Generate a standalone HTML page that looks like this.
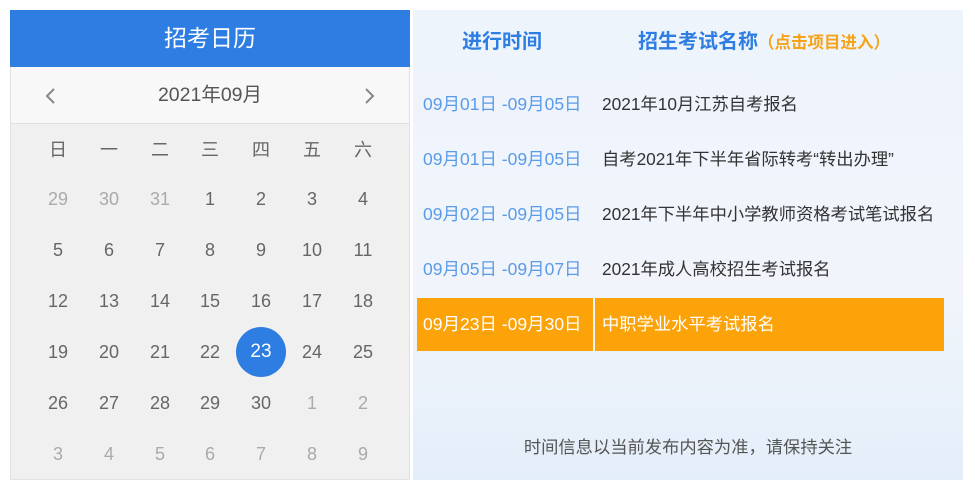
<!DOCTYPE html>
<html><head><meta charset="utf-8"><style>
body{margin:0;width:975px;height:491px;background:#fff;font-family:"Liberation Sans","Noto Sans CJK SC",sans-serif;position:relative;overflow:hidden}
.a{position:absolute}
#left{left:10px;top:10px;width:400px;height:470px;background:#f0f0f0;border:1px solid #e2e2e2;box-sizing:border-box}
#hd{left:10px;top:10px;width:400px;height:57px;background:#2d7de2;color:#fff;font-size:23px;text-align:center;line-height:57px}
#mb{left:11px;top:67px;width:398px;height:57px;background:#f8f8f8;border-bottom:1px solid #e0e0e0;box-sizing:border-box;text-align:center;line-height:57px;font-size:19.5px;color:#555}
.c{width:40px;margin-left:-20px;text-align:center;font-size:18px;height:24px;line-height:24px;margin-top:-12px;color:#666}
.g{color:#aaa}
#right{left:413px;top:10px;width:550px;height:470px;background:linear-gradient(#eef4fc,#f1f5fb 60%,#e4eef9)}
.th{font-size:20px;color:#2d7de2;font-weight:bold;top:30px;line-height:24px}
.d{left:423px;font-size:17.5px;color:#5a9be8;line-height:20px;margin-top:-10px}
.t{left:602px;font-size:17.3px;color:#333;line-height:20px;margin-top:-10px}
</style></head><body>
<div id="left" class="a"></div>
<div id="hd" class="a">招考日历</div>
<div id="mb" class="a">2021年09月</div>
<svg class="a" style="left:44px;top:87px" width="14" height="18"><path d="M10 2 L3 9 L10 16" stroke="#888" stroke-width="2" fill="none"/></svg>
<svg class="a" style="left:362px;top:87px" width="14" height="18"><path d="M4 2 L11 9 L4 16" stroke="#888" stroke-width="2" fill="none"/></svg>
<div class="a" style="left:236px;top:327px;width:50px;height:50px;border-radius:50%;background:#2d7de2"></div>
<div id="cal"></div>
<div id="right" class="a"></div>
<div class="a th" style="left:462px">进行时间</div>
<div class="a th" style="left:638px">招生考试名称<span style="font-size:16.5px;color:#f5a31a">（点击项目进入）</span></div>
<div class="a d" style="top:104px">09月01日 -09月05日</div><div class="a t" style="top:104px">2021年10月江苏自考报名</div>
<div class="a d" style="top:159px">09月01日 -09月05日</div><div class="a t" style="top:159px">自考2021年下半年省际转考“转出办理”</div>
<div class="a d" style="top:214px">09月02日 -09月05日</div><div class="a t" style="top:214px">2021年下半年中小学教师资格考试笔试报名</div>
<div class="a d" style="top:269px">09月05日 -09月07日</div><div class="a t" style="top:269px">2021年成人高校招生考试报名</div>
<div class="a" style="left:417px;top:298px;width:176px;height:53px;background:#fba308"></div>
<div class="a" style="left:595px;top:298px;width:349px;height:53px;background:#fba308"></div>
<div class="a d" style="top:324px;color:#fff">09月23日 -09月30日</div><div class="a t" style="top:324px;color:#fff">中职学业水平考试报名</div>
<div class="a" style="left:413px;width:550px;top:433px;text-align:center;font-size:17.3px;color:#555">时间信息以当前发布内容为准，请保持关注</div>
<script>
var xs=[58,109,160,210,261,312,363],h='';
var wd='日一二三四五六';
for(var i=0;i<7;i++)h+='<div class="a c" style="left:'+xs[i]+'px;top:150px">'+wd[i]+'</div>';
var d=[29,30,31];for(var i=1;i<=30;i++)d.push(i);for(var i=1;i<=9;i++)d.push(i);
for(var k=0;k<42;k++){var r=Math.floor(k/7),c=k%7;var g=(k<3||k>=33)?' g':'';var st=d[k]==23&&k==25?'color:#fff;font-size:19px;':'';
h+='<div class="a c'+g+'" style="'+st+'left:'+xs[c]+'px;top:'+(199+51*r)+'px">'+d[k]+'</div>';}
document.getElementById('cal').innerHTML=h;
</script>
</body></html>
